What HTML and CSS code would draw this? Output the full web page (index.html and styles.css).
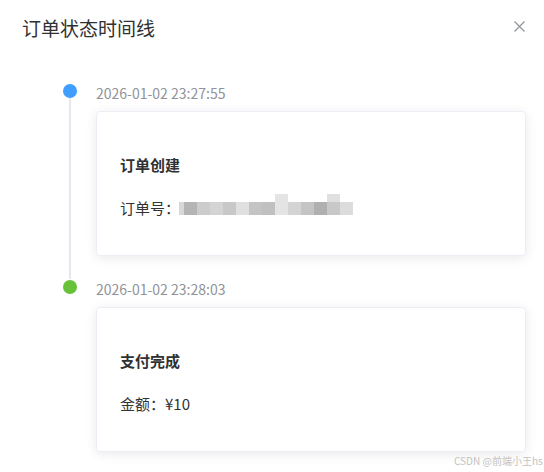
FILE: index.html
```html
<!DOCTYPE html>
<html lang="zh-CN">
<head>
<meta charset="utf-8">
<title>订单状态时间线</title>
<link rel="stylesheet" href="styles.css">
</head>
<body>
<div class="dialog">
  <header class="head">
    <span class="title">订单状态时间线</span>
    <button class="close" aria-label="关闭">
      <svg width="11" height="11" viewBox="0 0 11 11"><path d="M0.5 0.5 L10.5 10.5 M10.5 0.5 L0.5 10.5" stroke="#909399" stroke-width="1.2" fill="none"/></svg>
    </button>
  </header>
  <ul class="timeline">
    <li class="item">
      <div class="rail"><span class="dot dot-blue"></span><span class="tail"></span></div>
      <div class="content">
        <div class="ts">2026-01-02 23:27:55</div>
        <div class="card">
          <div class="card-body">
            <h4 class="card-title">订单创建</h4>
            <p class="card-text">订单号：<span class="mosaic"><span class="c c1"></span><span class="c c2"></span><span class="c c3"></span><span class="c c4"></span><span class="c c5"></span><span class="c c6"></span><span class="c c7"></span><span class="c c8"></span><span class="c c9 tall"></span><span class="c c10"></span><span class="c c11"></span><span class="c c12"></span><span class="c c13 tall"></span><span class="c c14"></span></span></p>
          </div>
        </div>
      </div>
    </li>
    <li class="item">
      <div class="rail"><span class="dot dot-green"></span></div>
      <div class="content">
        <div class="ts">2026-01-02 23:28:03</div>
        <div class="card">
          <div class="card-body">
            <h4 class="card-title">支付完成</h4>
            <p class="card-text">金额：¥10</p>
          </div>
        </div>
      </div>
    </li>
  </ul>
  <div class="wm">CSDN @前端小王hs</div>
</div>
</body>
</html>
```
FILE: styles.css
```css
html, body {
  margin: 0;
  padding: 0;
  background: #ffffff;
}
body {
  font-family: "Noto Sans CJK SC", "Noto Sans", sans-serif;
  color: #303133;
}
.dialog {
  position: relative;
  width: 544px;
  height: 472px;
  overflow: hidden;
}
.head {
  display: flex;
  justify-content: space-between;
  align-items: flex-start;
  padding: 15px 19px 0 22px;
}
.title {
  font-size: 19px;
  line-height: 26px;
  color: #303133;
}
.close {
  margin-top: 6px;
  padding: 0;
  border: 0;
  background: none;
  width: 11px;
  height: 11px;
  display: flex;
}
.timeline {
  list-style: none;
  margin: 42px 0 0;
  padding: 0 18px 0 63px;
}
.item {
  display: grid;
  grid-template-columns: 14px 1fr;
  column-gap: 19px;
}
.rail {
  display: flex;
  flex-direction: column;
  align-items: center;
}
.dot {
  width: 14px;
  height: 14px;
  border-radius: 50%;
  margin-top: 1px;
  flex: none;
}
.dot-blue { background: #409eff; }
.dot-green { background: #67c23a; }
.tail {
  flex: 1;
  width: 2px;
  background: #e4e7ed;
}
.content {
  padding-bottom: 23px;
}
.ts {
  font-size: 14px;
  line-height: 20px;
  color: #909399;
  margin-bottom: 8px;
}
.card {
  border: 1px solid #ebeef5;
  border-radius: 4px;
  background: #fff;
  box-shadow: 0 2px 12px 0 rgba(0, 0, 0, 0.09);
}
.card-body {
  padding: 20px 20px 20px 23px;
}
.card-title {
  margin: 22px 0 21px;
  font-size: 15px;
  line-height: 22px;
  font-weight: 700;
  color: #303133;
}
.card-text {
  margin: 0 0 16px;
  font-size: 15px;
  line-height: 22px;
  color: #333;
}
.mosaic {
  display: inline-flex;
  align-items: flex-end;
  vertical-align: top;
  height: 21px;
  margin-top: -3px;
  margin-left: -1px;
}
.c {
  display: block;
  width: 13px;
  height: 13px;
}
.c.tall { height: 21px; }
.c1 { width: 5px; background: #d8d8d8; }
.c2 { background: #b4b4b4; }
.c3 { background: #cccccc; }
.c4 { background: #d4d4d4; }
.c5 { background: #c8c8c8; }
.c6 { background: #e0e0e0; }
.c7 { background: #c4c4c4; }
.c8 { background: #c0c0c0; }
.c9 { background: #e4e4e4; }
.c10 { background: #d4d4d4; }
.c11 { background: #c4c4c4; }
.c12 { background: #b0b0b0; }
.c13 { background: linear-gradient(#e0e0e0 0 8px, #c8c8c8 8px 21px); }
.c14 { background: #dcdcdc; }
.wm {
  position: absolute;
  left: 454px;
  top: 454px;
  font-size: 10px;
  line-height: 14px;
  color: #c2c2c2;
  white-space: nowrap;
}
```
